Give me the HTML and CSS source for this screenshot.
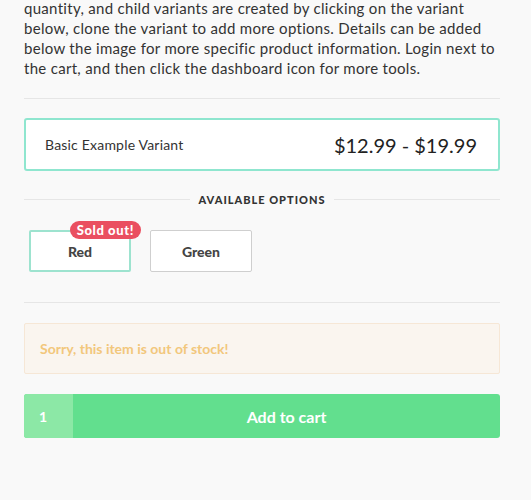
FILE: index.html
```html
<!DOCTYPE html>
<html lang="en">
<head>
    <meta charset="UTF-8">
    <meta name="viewport" content="width=device-width, initial-scale=1.0">
    <title>Product</title>
    <link rel="stylesheet" href="styles.css">
</head>
<body>
    <div class="product">
        <p class="description">quantity, and child variants are created by clicking on the variant below, clone the variant to add more options. Details can be added below the image for more specific product information. Login next to the cart, and then click the dashboard icon for more tools.</p>

        <hr class="divider">

        <div class="variant">
            <span class="variant-title">Basic Example Variant</span>
            <span class="variant-price">$12.99 - $19.99</span>
        </div>

        <div class="options-heading">
            <span>Available options</span>
        </div>

        <div class="options">
            <button class="option active">
                Red
                <span class="badge">Sold out!</span>
            </button>
            <button class="option">Green</button>
        </div>

        <hr class="divider divider-options">

        <div class="alert">Sorry, this item is out of stock!</div>

        <div class="cart">
            <div class="qty">1</div>
            <button class="add-to-cart">Add to cart</button>
        </div>
    </div>
</body>
</html>
```

FILE: styles.css
```css
body {
    margin: 0;
    padding: 0;
    background-color: #f9f9f9;
    font-family: "Lato", "Open Sans", sans-serif;
    color: #333;
}

.product {
    margin: 0 31px 0 24px;
}

.description {
    margin: -2px 0 0 0;
    font-size: 15px;
    line-height: 20px;
    letter-spacing: 0.3px;
    color: #333;
}

.divider {
    border: none;
    border-top: 1px solid #e6e6e6;
    margin: 20px 0 19px 0;
}

.divider-options {
    margin-top: 30px;
    margin-bottom: 20px;
}

.variant {
    display: flex;
    justify-content: space-between;
    align-items: center;
    height: 49px;
    padding: 0 21px 0 19px;
    background: #fff;
    border: 2px solid #8fe6cf;
    border-radius: 3px;
}

.variant-title {
    font-size: 14px;
    letter-spacing: 0.2px;
    color: #333;
}

.variant-price {
    font-size: 20px;
    color: #222;
}

.options-heading {
    display: flex;
    align-items: center;
    gap: 9px;
    margin-top: 22px;
    font-size: 11px;
    font-weight: 900;
    letter-spacing: 1px;
    text-transform: uppercase;
    color: #333;
}

.options-heading::before,
.options-heading::after {
    content: "";
    flex: 1;
    border-top: 1px solid #e6e6e6;
}

.options {
    display: flex;
    gap: 19px;
    margin: 24px 0 0 5px;
}

.option {
    position: relative;
    width: 102px;
    height: 42px;
    background: #fff;
    border: 1px solid #cfcfcf;
    border-radius: 2px;
    font-family: inherit;
    font-size: 14px;
    font-weight: 900;
    color: #444;
    cursor: pointer;
}

.option.active {
    border: 2px solid #9de3cf;
}

.badge {
    position: absolute;
    top: -11px;
    right: -12px;
    padding: 1px 7px;
    background: #ea4f60;
    color: #fff;
    border-radius: 9px;
    font-family: "Lato", sans-serif;
    font-size: 13px;
    font-weight: 900;
    letter-spacing: 0.6px;
    line-height: 16px;
}

.alert {
    padding: 16px 15px;
    font-size: 14px;
    line-height: 17px;
    font-weight: 700;
    color: #f2c77c;
    background: #faf5ef;
    border: 1px solid #f6e7d6;
    border-radius: 2px;
}

.cart {
    display: flex;
    height: 44px;
    margin-top: 20px;
    background: #62df8e;
    border-radius: 3px;
    overflow: hidden;
}

.qty {
    width: 34px;
    padding-left: 15px;
    display: flex;
    align-items: center;
    background: #8ce8a6;
    color: #fff;
    font-size: 14px;
    font-weight: 700;
}

.add-to-cart {
    flex: 1;
    background: none;
    border: none;
    color: #fff;
    font-family: inherit;
    font-size: 16px;
    font-weight: 700;
    cursor: pointer;
}
```
